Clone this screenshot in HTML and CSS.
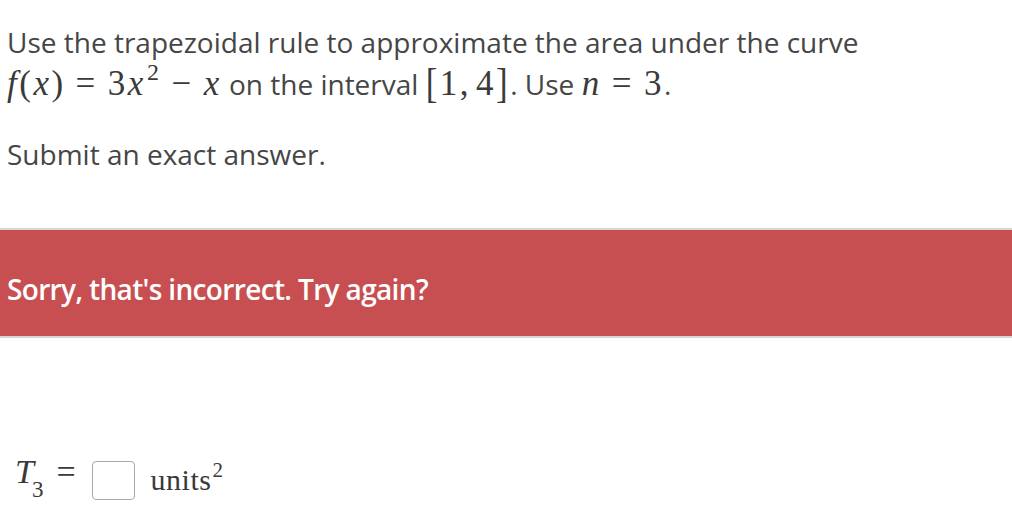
FILE: index.html
```html
<!DOCTYPE html>
<html>
<head>
<meta charset="utf-8">
<link rel="stylesheet" href="styles.css">
</head>
<body>
<div class="question">
  <p class="prompt">Use the trapezoidal rule to approximate the area under the curve<br><span class="math"><i>f</i>(<i>x</i>)<span class="rel">=</span>3<i>x</i><sup>2</sup><span class="bin">−</span><i>x</i></span> on the interval <span class="math"><span class="delim">[</span>1,<span class="thin"></span>4<span class="delim">]</span></span>. Use <span class="math"><i>n</i><span class="rel">=</span>3</span>.</p>
  <p class="prompt second">Submit an exact answer.</p>
</div>
<div class="feedback">
  <div class="feedback-text">Sorry, that's incorrect. Try again?</div>
</div>
<div class="answer">
  <span class="math answer-math"><i>T</i><sub>3</sub><span class="rel">=</span></span>
  <span class="input-box"></span>
  <span class="math units">units<sup>2</sup></span>
</div>
</body>
</html>
```

FILE: styles.css
```css
html, body {
  margin: 0;
  padding: 0;
  background: #ffffff;
}
body {
  font-family: "Open Sans", "Liberation Sans", sans-serif;
  color: #464646;
}
.question {
  padding: 21px 0 0 7px;
}
.prompt {
  margin: 0;
  font-size: 28px;
  line-height: 42px;
}
.second {
  margin-top: 28px;
}
.math {
  font-family: "Liberation Serif", "DejaVu Serif", serif;
  font-size: 35px;
  color: #3a3a3a;
  line-height: 0;
  letter-spacing: 2.5px;
}
.math i {
  font-style: italic;
}
.math sup {
  font-size: 24px;
  vertical-align: 15px;
  line-height: 0;
  margin-left: 1px;
}
.math sub {
  font-size: 23px;
  vertical-align: -12px;
  line-height: 0;
}
.rel {
  margin: 0 10px;
}
.bin {
  margin: 0 10px;
}
.thin {
  display: inline-block;
  width: 5px;
}
.delim {
  display: inline-block;
  transform: scaleY(1.2);
}
.feedback {
  margin-top: 53px;
  background: #c84f51;
  border-top: 2px solid #d6d6d6;
  border-bottom: 2px solid #d6d6d6;
  height: 106px;
  padding: 0 7px;
  display: flex;
  align-items: flex-end;
}
.feedback-text {
  color: #ffffff;
  font-size: 28px;
  font-weight: 600;
  letter-spacing: -0.65px;
  line-height: 36px;
  padding-bottom: 29px;
}
.answer {
  display: flex;
  align-items: center;
  padding: 123px 0 0 15px;
}
.answer-math {
  font-size: 34px;
  letter-spacing: 0;
}
.answer-math i {
  letter-spacing: 0;
}
.answer-math sub {
  font-size: 23px;
  vertical-align: -14px;
  margin-left: -2px;
}
.answer-math .rel {
  margin: 0 16px 0 13px;
}
.input-box {
  display: inline-block;
  width: 41px;
  height: 37px;
  border: 1px solid #a9a9a9;
  border-radius: 4px;
}
.units {
  margin-left: 16px;
  margin-bottom: 12px;
  font-size: 30px;
  letter-spacing: 0.5px;
}
.units sup {
  font-size: 21px;
  vertical-align: 13px;
}
```
